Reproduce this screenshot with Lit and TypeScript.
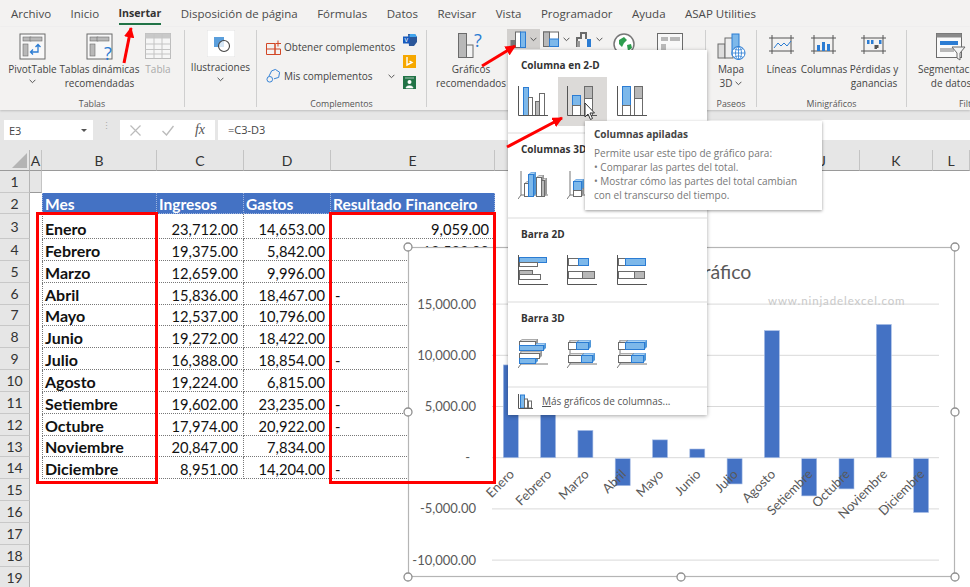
import { LitElement, html, css, svg } from 'lit';
import { customElement } from 'lit/decorators.js';

const GR = '#6b6b6b';
const BL = '#2b7cd3';
const BF = '#7db8ea';
const GF = '#b8b8b8';

// one rect of a mini chart: x, y, w, h, kind
type R = [number, number, number, number, 'b' | 'g' | 'w'];

const barRect = ([x, y, w, h, k]: R) => {
  const fill = k === 'b' ? BF : k === 'g' ? GF : '#fff';
  const stroke = k === 'b' ? BL : GR;
  return svg`<rect x=${x + 0.5} y=${y + 0.5} width=${w} height=${h} fill=${fill} stroke=${stroke} stroke-width="1"/>`;
};

const mini = (rects: R[]) => html`<svg class="mini" viewBox="0 0 30 32" width="30" height="32">
  ${rects.map(barRect)}
  <path d="M.5 1v29.5H30" fill="none" stroke="#555" stroke-width="1"/>
</svg>`;

// same thing with a little depth on every bar and a slanted floor
const mini3d = (rects: R[]) => html`<svg class="mini" viewBox="0 0 30 32" width="30" height="32">
  <path d="M3 2v24l-3 4M3 26h27" fill="none" stroke="#777" stroke-width="1"/>
  ${rects.map(([x, y, w, h, k]) => {
    const side = k === 'b' ? '#4f97d8' : '#999';
    return svg`<polygon points="${x + w + 0.5},${y + 0.5} ${x + w + 3},${y - 1.5} ${x + w + 3},${y + h - 2} ${x + w + 0.5},${y + h + 0.5}" fill=${side}/>
      <polygon points="${x + 0.5},${y + 0.5} ${x + 3},${y - 1.5} ${x + w + 3},${y - 1.5} ${x + w + 0.5},${y + 0.5}" fill=${k === 'b' ? '#a9d2f2' : '#ddd'} stroke=${k === 'b' ? BL : GR} stroke-width=".5"/>`;
  })}
  ${rects.map(barRect)}
</svg>`;

const chartGroups = [
  {
    title: 'Columna en 2-D',
    hover: 1,
    icons: [
      mini([[5, 2, 5, 28, 'b'], [10, 12, 4, 18, 'w'], [17, 16, 4, 14, 'g'], [21, 8, 5, 22, 'w']]),
      mini([[5, 10, 8, 10, 'b'], [5, 20, 8, 10, 'w'], [17, 1, 8, 12, 'g'], [17, 13, 8, 17, 'w']]),
      mini([[5, 1, 8, 19, 'b'], [5, 20, 8, 10, 'w'], [17, 1, 8, 12, 'g'], [17, 13, 8, 17, 'w']]),
    ],
  },
  {
    title: 'Columnas 3D',
    hover: -1,
    icons: [
      mini3d([[6, 14, 4, 13, 'w'], [10, 5, 5, 22, 'b'], [18, 8, 5, 19, 'w'], [23, 11, 3, 16, 'g']]),
      mini3d([[6, 12, 8, 9, 'b'], [6, 21, 8, 6, 'w'], [18, 6, 7, 8, 'g'], [18, 14, 7, 13, 'w']]),
      mini3d([[6, 3, 8, 16, 'b'], [6, 19, 8, 8, 'w'], [18, 3, 7, 9, 'g'], [18, 12, 7, 15, 'w']]),
    ],
  },
  {
    title: 'Barra 2D',
    hover: -1,
    icons: [
      mini([[1, 3, 27, 5, 'b'], [1, 8, 18, 4, 'w'], [1, 16, 13, 4, 'g'], [1, 20, 21, 5, 'w']]),
      mini([[1, 4, 10, 7, 'w'], [11, 4, 10, 7, 'b'], [1, 17, 14, 7, 'w'], [15, 17, 12, 7, 'g']]),
      mini([[1, 4, 7, 7, 'w'], [8, 4, 20, 7, 'b'], [1, 17, 16, 7, 'w'], [17, 17, 10, 7, 'g']]),
    ],
  },
  {
    title: 'Barra 3D',
    hover: -1,
    icons: [
      mini3d([[1, 3, 16, 4, 'w'], [1, 7, 24, 5, 'b'], [1, 15, 20, 5, 'w'], [1, 20, 16, 5, 'b']]),
      mini3d([[1, 4, 8, 7, 'w'], [9, 4, 12, 7, 'b'], [1, 17, 13, 7, 'w'], [14, 17, 11, 7, 'b']]),
      mini3d([[1, 4, 7, 7, 'w'], [8, 4, 19, 7, 'b'], [1, 17, 13, 7, 'w'], [14, 17, 12, 7, 'b']]),
    ],
  },
];

const chevron = html`<svg class="chev" width="7" height="5" viewBox="0 0 7 5"><path d="M.6 .8 3.5 3.7 6.4 .8" fill="none" stroke="#555" stroke-width="1"/></svg>`;

const tableBase = svg`
  <rect x="1" y="1" width="25" height="25" fill="#f8f8f8" stroke=${GR}/>
  <rect x="4" y="4" width="8" height="4" fill=${GF} stroke=${GR} stroke-width=".6"/>
  <rect x="11" y="4" width="12" height="4" fill=${GF} stroke=${GR} stroke-width=".6"/>
  <rect x="4" y="11" width="5" height="12" fill=${GF} stroke=${GR} stroke-width=".6"/>`;

const pivotIcon = html`<svg width="28" height="28" viewBox="0 0 28 28">
  ${tableBase}
  <path d="M19 12v7h-7M16.500 14 19 11.500 21.500 14M14 16.500 11.500 19 14 21.500" fill="none" stroke=${BL} stroke-width="1.300"/>
</svg>`;
const recoIcon = html`<svg class="ov" width="28" height="28" viewBox="0 0 28 28">
  ${tableBase}
  <text x="18" y="27" class="qm">?</text>
</svg>`;
const tablaIcon = html`<svg width="27" height="27" viewBox="0 0 27 27">
  <rect x=".5" y=".5" width="25" height="25" fill="#f6f6f6" stroke="#bdbdbd"/>
  <rect x=".5" y=".5" width="25" height="5" fill="#c9c9c9"/>
  <path d="M.5 11h25M.5 16.500h25M.5 21h25M9 .5v25M17 .5v25" stroke="#c4c4c4" fill="none"/>
</svg>`;
const ilusIcon = html`<svg width="28" height="27" viewBox="0 0 28 27">
  <rect width="28" height="27" fill="#fff" stroke="#e2e2e2"/>
  <rect x="7" y="7" width="10" height="10" fill="#5b9fdc"/>
  <circle cx="17" cy="16" r="5.500" fill="#fff" fill-opacity=".75" stroke="#444" stroke-width="1.100"/>
</svg>`;
const addinIcon = html`<svg width="15" height="15" viewBox="0 0 15 15">
  <path d="M.5 3.500h8.500v11H.5zM.5 9h14v5.500H9M9 3.500v11" fill="none" stroke="#d24726" stroke-width="1"/>
  <path d="M12 .5v6M9.500 3.500h5.500" stroke="#d24726" stroke-width="1"/>
</svg>`;
const myIcon = html`<svg width="15" height="16" viewBox="0 0 16 16">
  <path d="M6 2.500 10 1l4.500 3-1 5.500-5 1.500" fill="none" stroke=${BL} stroke-width="1"/>
  <circle cx="4" cy="11.500" r="3" fill="none" stroke=${BL} stroke-width="1"/>
  <path d="M6 2.500 3 8.500" stroke=${BL} stroke-width="1"/>
</svg>`;
const visioIcon = html`<svg width="14" height="13" viewBox="0 0 14 13">
  <path d="M5 0h7l2 3v5l-3 4H6z" fill="#2b579a"/><path d="M7 0h5l2 3H6z" fill="#41a5ee"/>
  <rect y="2.500" width="7" height="7" fill="#185abd"/>
  <text x="1.500" y="8.200" class="tiny">v</text>
</svg>`;
const bingIcon = html`<svg width="13" height="13" viewBox="0 0 13 13">
  <rect width="13" height="13" fill="#f6a800"/>
  <path d="M4 2v8l5-2.500L6.500 6" fill="none" stroke="#fff" stroke-width="1.400"/>
</svg>`;
const peopleIcon = html`<svg width="13" height="13" viewBox="0 0 13 13">
  <rect width="13" height="13" fill="#217346"/>
  <circle cx="6.500" cy="6" r="2" fill="#fff"/><path d="M3 12c0-3 7-3 7 0zM2 2h9" fill="#fff" stroke="#fff" stroke-width=".6"/>
</svg>`;
const recoChartIcon = html`<svg class="ov" width="26" height="26" viewBox="0 0 26 26">
  <rect x=".5" y=".5" width="8" height="24" fill=${GF} stroke=${GR}/>
  <rect x="8.500" y="12" width="6.500" height="12.500" fill="#f4f4f4" stroke=${GR}/>
  <text x="16" y="14" class="qm">?</text>
</svg>`;
const colBtn = html`<svg width="17" height="17" viewBox="0 0 17 17">
  <rect x=".5" y="9" width="5" height="7.500" fill="#777"/>
  <rect x="5.500" y="1" width="5" height="15.500" fill="#fff" stroke=${GR}/>
  <rect x="10.500" y="1" width="5" height="15.500" fill=${BF} stroke=${BL}/>
</svg>`;
const stackBtn = html`<svg width="17" height="17" viewBox="0 0 17 17">
  <rect x=".5" y="1" width="15" height="14.500" fill="#fff" stroke=${GR}/>
  <rect x=".5" y="1" width="6" height="14.500" fill=${GF} stroke=${GR}/>
  <rect x="6.500" y="8" width="9" height="7.500" fill=${BF} stroke=${BL}/>
</svg>`;
const stepBtn = html`<svg width="17" height="17" viewBox="0 0 17 17">
  <path d="M1 16V7h4V2h5v6" fill="none" stroke=${GR} stroke-width="2"/>
  <rect x="11" y="8" width="4" height="8" fill=${BL}/>
  <rect x="1" y="10" width="3" height="6" fill="#999"/>
</svg>`;
const globeIcon = html`<svg width="22" height="22" viewBox="0 0 22 22">
  <circle cx="11" cy="11" r="10" fill="#fff" stroke="#777" stroke-width="1.500"/>
  <path d="M6 7l5-3 3 3-3 3-2 4-3-3zM14 12l4-1 1 4-4 3z" fill="#2e9e4f"/>
</svg>`;
const layoutIcon = html`<svg width="27" height="22" viewBox="0 0 27 22">
  <rect x=".5" y=".5" width="25" height="21" fill="#f8f8f8" stroke=${GR}/>
  <rect x="4" y="4" width="7" height="4" fill=${GF}/><rect x="13" y="4" width="10" height="4" fill=${GF}/>
  <rect x="4" y="11" width="5" height="9" fill=${GF}/>
</svg>`;
const mapaIcon = html`<svg width="29" height="28" viewBox="0 0 29 28">
  <rect x="1" y="11" width="7" height="14" fill="#ddd" stroke=${GR}/>
  <rect x="8" y="5" width="8" height="20" fill="#eee" stroke=${GR}/>
  <rect x="15" y="1" width="7" height="21" fill=${BF} stroke=${BL}/>
  <circle cx="21.500" cy="20" r="6.500" fill="#fff" stroke=${BL}/>
  <path d="M15 20h13M21.500 13.500v13M17 15.500c3 2 6 2 9 0M17 24.500c3-2 6-2 9 0" fill="none" stroke=${BL} stroke-width=".8"/>
  <ellipse cx="21.500" cy="20" rx="3" ry="6.500" fill="none" stroke=${BL} stroke-width=".8"/>
</svg>`;
const sparkBase = 'M0 3h25M3 0v19M0 16h25M22 0v19';
const lineasIcon = html`<svg width="26" height="20" viewBox="0 0 26 20">
  <path d=${sparkBase} stroke="#555" fill="none"/><path d="M5 13l4-5 3 3 3-3 3 3 4-5" stroke=${BL} fill="none"/>
</svg>`;
const colsIcon = html`<svg width="26" height="20" viewBox="0 0 26 20">
  <path d=${sparkBase} stroke="#555" fill="none"/>
  <rect x="6" y="10" width="3" height="6" fill=${BL}/><rect x="11" y="7" width="3" height="9" fill=${BL}/><rect x="16" y="9" width="3" height="7" fill=${BL}/>
</svg>`;
const winIcon = html`<svg width="26" height="20" viewBox="0 0 26 20">
  <path d=${sparkBase} stroke="#555" fill="none"/>
  <rect x="6" y="5" width="2.500" height="4" fill=${BL}/><rect x="10" y="5" width="2.500" height="4" fill=${BL}/><rect x="18" y="5" width="2.500" height="4" fill=${BL}/>
  <rect x="13.500" y="10" width="2.500" height="4" fill="#555"/><rect x="16" y="10" width="1.500" height="3" fill="#555"/>
</svg>`;
const sliceIcon = html`<svg width="30" height="28" viewBox="0 0 30 28">
  <rect x=".5" y=".5" width="25" height="24" fill="#fafafa" stroke=${GR}/>
  <rect x=".5" y=".5" width="25" height="4" fill="#8a8a8a"/>
  <rect x="4" y="8" width="18" height="4" fill=${BL}/>
  <rect x="4" y="15" width="14" height="4" fill=${GF}/>
  <path d="M16 14h13l-5 6v7l-3-2v-5z" fill="#f4f4f4" stroke=${GR}/>
</svg>`;

const months: [string, number, number][] = [
  ['Enero', 23712, 14653],
  ['Febrero', 19375, 5842],
  ['Marzo', 12659, 9996],
  ['Abril', 15836, 18467],
  ['Mayo', 12537, 10796],
  ['Junio', 19272, 18422],
  ['Julio', 16388, 18854],
  ['Agosto', 19224, 6815],
  ['Setiembre', 19602, 23235],
  ['Octubre', 17974, 20922],
  ['Noviembre', 20847, 7834],
  ['Diciembre', 8951, 14204],
];

const money = (n: number) =>
  Math.abs(n).toLocaleString('en-US', { minimumFractionDigits: 2, maximumFractionDigits: 2 });

const columns = ['A', 'B', 'C', 'D', 'E', 'F', 'G', 'H', 'I', 'J', 'K', 'L'];

@customElement('sheet-grid')
class SheetGrid extends LitElement {
  static styles = css`
    :host {
      display: grid;
      grid-template-columns: 30px 12px 115px 87px 87px 164px repeat(6, 73px) 1fr;
      grid-template-rows: 21px 22px 21px 25px repeat(16, 21.85px);
      height: 437px;
      overflow: hidden;
      background: #fff;
      font-family: 'Lato', 'Liberation Sans', sans-serif;
      font-size: 14.7px;
      color: #111;
    }
    .corner {
      background: #e6e6e6;
      border-right: 1px solid #b5b5b5;
      border-bottom: 1px solid #9a9a9a;
      position: relative;
    }
    .corner::after {
      content: '';
      position: absolute;
      right: 2px;
      bottom: 2px;
      border-style: solid;
      border-width: 0 0 15px 15px;
      border-color: transparent transparent #b4b4b4 transparent;
    }
    .ch {
      background: #e6e6e6;
      border-right: 1px solid #c4c4c4;
      border-bottom: 1px solid #9a9a9a;
      display: flex;
      align-items: center;
      justify-content: center;
      color: #333;
      font-size: 14px;
    }
    .rh {
      grid-column: 1;
      background: #e6e6e6;
      border-right: 1px solid #b5b5b5;
      border-bottom: 1px solid #c8c8c8;
      display: flex;
      align-items: center;
      justify-content: center;
      color: #333;
      font-size: 14px;
    }
    .c {
      padding: 0 2px;
      display: flex;
      align-items: flex-end;
      line-height: 18px;
      white-space: nowrap;
      overflow: hidden;
      border-right: 1px dotted #777;
      border-bottom: 1px dotted #777;
    }
    .num {
      justify-content: flex-end;
      padding-right: 5px;
    }
    .first {
      font-weight: 700;
      font-size: 16px;
      border-left: 1px dotted #777;
    }
    .head {
      background: #4472c4;
      color: #fff;
      font-weight: 700;
      font-size: 15.5px;
      border-color: #9db3dd;
    }
    .dash {
      padding-left: 2px;
    }
    .amount {
      margin-left: auto;
    }
  `;

  // explicit column and row for a table cell
  at(col: number, row: number) {
    return `grid-column:${col};grid-row:${row}`;
  }

  render() {
    return html`
      <div class="corner"></div>
      ${columns.map((c) => html`<div class="ch">${c}</div>`)}
      <div class="ch"></div>
      ${Array.from({ length: 19 }, (_, i) => html`<div class="rh" style="grid-row:${i + 2}">${i + 1}</div>`)}
      <div class="c head first" style=${this.at(3, 3)}>Mes</div>
      <div class="c head" style=${this.at(4, 3)}>Ingresos</div>
      <div class="c head" style=${this.at(5, 3)}>Gastos</div>
      <div class="c head" style=${this.at(6, 3)}>Resultado Financeiro</div>
      ${months.map(([m, a, b], i) => {
        const d = a - b;
        return html`
          <div class="c first" style=${this.at(3, i + 4)}>${m}</div>
          <div class="c num" style=${this.at(4, i + 4)}>${money(a)}</div>
          <div class="c num" style=${this.at(5, i + 4)}>${money(b)}</div>
          <div class="c num" style=${this.at(6, i + 4)}>
            ${d < 0 ? html`<span class="dash">-</span>` : ''}<span class="amount">${money(d)}</span>
          </div>
        `;
      })}
    `;
  }
}

@customElement('bar-chart')
class BarChart extends LitElement {
  static styles = css`
    :host {
      position: absolute;
      left: 408px;
      top: 247px;
      width: 547px;
      height: 330px;
      background: #fff;
    }
    svg {
      overflow: visible;
      display: block;
    }
    text {
      font-family: 'Lato', 'Liberation Sans', sans-serif;
      fill: #595959;
    }
    .tick {
      font-size: 13px;
    }
    .cat {
      font-size: 13px;
    }
    .title {
      font-size: 19.500px;
    }
    .mark {
      font-size: 11.500px;
      fill: #c9c9c9;
      letter-spacing: 0.9px;
    }
  `;

  render() {
    const zero = 210.7;
    const perUnit = 51.2 / 5000;
    const ticks: [number, string][] = [
      [15000, '15,000.00'],
      [10000, '10,000.00'],
      [5000, '5,000.00'],
      [0, '-'],
      [-5000, '-5,000.00'],
      [-10000, '-10,000.00'],
    ];
    const handles = [
      [0, 0],
      [273, 0],
      [547, 0],
      [0, 165],
      [547, 165],
      [0, 330],
      [273, 330],
      [547, 330],
    ];
    return html`<svg width="547" height="330" viewBox="0 0 547 330">
      <rect x=".5" y=".5" width="546" height="329" fill="#fff" stroke="#b5b5b5" stroke-width="1.200"/>
      <text class="title" x="272" y="32" text-anchor="middle">Título del gráfico</text>
      ${ticks.map(([v, label]) => {
        const y = zero - v * perUnit;
        return svg`
          <line x1="84" x2="531" y1=${y} y2=${y} stroke="#d9d9d9" stroke-width="1"/>
          <text class="tick" x=${v === 0 ? 62 : 68} y=${y + 4.500} text-anchor="end">${label}</text>`;
      })}
      ${months.map(([, a, b], i) => {
        const d = a - b;
        const h = Math.abs(d) * perUnit;
        const x = 95.3 + i * 37.3;
        return svg`<rect x=${x} y=${d > 0 ? zero - h : zero + 1} width="15" height=${h} fill="#4472c4" stroke="#a9bee6" stroke-width=".6"/>`;
      })}
      ${months.map(([m], i) => {
        const x = 107 + i * 37.3;
        return svg`<text class="cat" transform="translate(${x} 228) rotate(-45)" text-anchor="end">${m}</text>`;
      })}
      <text class="mark" x="360" y="58">www.ninjadelexcel.com</text>
      ${handles.map(
        ([x, y]) => svg`<circle cx=${x} cy=${y} r="4" fill="#fff" stroke="#8f8f8f" stroke-width="1.300"/>`
      )}
    </svg>`;
  }
}

@customElement('app-root')
class AppRoot extends LitElement {
  static styles = css`
    :host {
      display: flex;
      flex-direction: column;
      position: relative;
      width: 970px;
      height: 587px;
      overflow: hidden;
      background: #f3f2f1;
      font-family: 'Open Sans', 'Liberation Sans', sans-serif;
      color: #444;
    }
    .tabs {
      display: flex;
      gap: 19.500px;
      height: 27px;
      padding-left: 11px;
      font-size: 11.500px;
      line-height: 27px;
      white-space: nowrap;
      color: #4a4a4a;
    }
    .tabs .on {
      font-weight: 700;
      font-size: 10.600px;
      color: #333;
      position: relative;
    }
    .tabs .on::after {
      content: '';
      position: absolute;
      left: 0;
      right: 0;
      top: 23px;
      height: 2px;
      background: #217346;
    }
    .ribbon {
      display: flex;
      height: 83px;
      padding-top: 3px;
      box-sizing: border-box;
      font-size: 10px;
      line-height: 14px;
      box-shadow: 0 1px 2px #bdbdbd;
      position: relative;
      white-space: nowrap;
    }
    .group {
      display: flex;
      flex-direction: column;
      height: 77px;
      box-sizing: content-box;
      border-right: 1px solid #cfcfcf;
      flex: none;
    }
    .group-body {
      display: flex;
      flex: 1;
    }
    .group-name {
      text-align: center;
      font-size: 8.800px;
      line-height: 14px;
      margin-bottom: -4px;
      color: #555;
    }
    .tablas { width: 184px; }
    .ilus { width: 71px; }
    .comp { width: 169px; }
    .graf { width: 278px; }
    .pase { width: 50px; }
    .mini-g { width: 149px; }
    .filt { flex: 1; border-right: none; }
    .tablas .group-body { padding-left: 5px; }
    .mini-g .group-body { padding-left: 5px; }
    .graf .group-body { padding-left: 6px; }
    .filt .group-body { padding-left: 4px; }
    .big {
      display: flex;
      flex-direction: column;
      align-items: center;
      flex: none;
      text-align: center;
    }
    .big .ico {
      height: 32px;
      padding-top: 3px;
      box-sizing: border-box;
      display: flex;
      justify-content: center;
    }
    .big .ico.low {
      padding-top: 5px;
    }
    .w38 { width: 38px; }
    .w39 { width: 39px; }
    .w46 { width: 46px; }
    .w50 { width: 50px; }
    .w54 { width: 54px; }
    .w55 { width: 55px; }
    .w71 { width: 71px; }
    .w76 { width: 76px; }
    .w79 { width: 79px; }
    .w80 { width: 80px; }
    .dim { color: #aaa; }
    .ov { overflow: visible; }
    .qm {
      font-family: 'Open Sans', sans-serif;
      font-size: 18px;
      fill: #2b7cd3;
    }
    .tiny {
      font-family: 'Open Sans', sans-serif;
      font-size: 7px;
      fill: #fff;
    }
    .big .ico.ilus-ico {
      height: 30px;
      padding-top: 0;
    }
    .chev { display: block; margin: 3px auto 0; }
    .chev-line {
      display: flex;
      align-items: center;
      gap: 3px;
    }
    .chev-line .chev { margin: 0; }
    .comp .group-body {
      justify-content: space-between;
      padding: 0 9px 0 9px;
    }
    .comp-rows {
      display: flex;
      flex-direction: column;
      gap: 13px;
      padding-top: 9px;
    }
    .row {
      display: flex;
      align-items: center;
      gap: 3px;
      height: 16px;
    }
    .row .chev { margin: 0 0 0 12px; }
    .comp-side {
      display: flex;
      flex-direction: column;
      gap: 8px;
      padding-top: 4px;
    }
    .small-btns {
      display: flex;
      height: 20px;
      margin: -1px 0 0 -2px;
    }
    .small-btn {
      display: flex;
      align-items: center;
      gap: 3px;
      height: 20px;
      padding: 0 3px;
      box-sizing: border-box;
      width: 33px;
    }
    .small-btn .chev { margin: 0; }
    .small-btn.hot { background: #d2d0ce; }
    .globe {
      margin: 3px 0 0 7px;
    }
    .layout {
      margin: 3px 0 0 22px;
    }
    .formula {
      display: flex;
      align-items: flex-start;
      height: 40px;
      padding: 10px 0 0 4px;
      box-sizing: border-box;
      background: #e6e6e6;
      font-size: 11px;
      color: #444;
    }
    .name {
      width: 89px;
      height: 20px;
      background: #fff;
      box-sizing: border-box;
      padding: 0 6px 0 5px;
      display: flex;
      align-items: center;
      justify-content: space-between;
    }
    .caret {
      width: 0;
      height: 0;
      border-style: solid;
      border-width: 3px 3px 0;
      border-color: #555 transparent transparent;
    }
    .grip {
      width: 27px;
      display: flex;
      justify-content: center;
      color: #aaa;
      font-size: 9px;
      line-height: 6px;
      padding-top: 3px;
      flex-direction: column;
      align-items: center;
    }
    .fx {
      width: 95px;
      height: 20px;
      background: #fff;
      display: flex;
      align-items: center;
      justify-content: space-between;
      box-sizing: border-box;
      padding: 0 10px;
      margin-right: 3px;
    }
    .fx i {
      font-family: 'Liberation Serif', serif;
      font-size: 14px;
      color: #555;
    }
    .input {
      flex: 1;
      height: 20px;
      background: #fff;
      padding-left: 10px;
      line-height: 20px;
    }
    /* dropdown with the chart types */
    .menu {
      position: absolute;
      left: 508px;
      top: 50px;
      width: 199px;
      height: 365px;
      background: #fff;
      box-shadow: 0 1px 4px rgba(0, 0, 0, 0.35);
      font-size: 10px;
      display: flex;
      flex-direction: column;
      box-sizing: border-box;
    }
    .sec {
      height: 84.400px;
      border-bottom: 2px solid #ededed;
      box-sizing: border-box;
      padding: 8px 0 0 13px;
    }
    .sec b {
      display: block;
      line-height: 14px;
      color: #333;
    }
    .icons {
      display: flex;
      margin: 5px 0 0 -13px;
    }
    .ic {
      width: 49.500px;
      height: 49px;
      padding-top: 8px;
      box-sizing: border-box;
      display: flex;
      justify-content: center;
    }
    .ic.hot { background: #dcdad8; }
    .more {
      display: flex;
      align-items: center;
      gap: 9px;
      padding: 6px 0 0 10px;
      color: #555;
    }
    .more u { text-decoration-thickness: 1px; }
    /* tooltip of the hovered chart */
    .tip {
      position: absolute;
      left: 585px;
      top: 121px;
      width: 237px;
      height: 89px;
      box-sizing: border-box;
      background: #fff;
      box-shadow: 0 1px 3px rgba(0, 0, 0, 0.4);
      padding: 6px 9px;
      font-size: 10px;
      line-height: 14px;
      color: #777;
      white-space: nowrap;
    }
    .tip b {
      display: block;
      color: #444;
      margin-bottom: 5px;
    }
    .over {
      position: absolute;
      left: 0;
      top: 0;
      pointer-events: none;
    }
    .box {
      position: absolute;
      top: 212px;
      height: 272px;
      box-sizing: border-box;
      border: 3px solid #f00;
    }
    .box.b1 { left: 36px; width: 122px; }
    .box.b2 { left: 329px; width: 167px; }
  `;

  render() {
    return html`
      <div class="tabs">
        <span>Archivo</span><span>Inicio</span><span class="on">Insertar</span>
        <span>Disposición de página</span><span>Fórmulas</span><span>Datos</span><span>Revisar</span>
        <span>Vista</span><span>Programador</span><span>Ayuda</span><span>ASAP Utilities</span>
      </div>

      <div class="ribbon">
        <div class="group tablas">
          <div class="group-body">
            <div class="big w55"><div class="ico">${pivotIcon}</div>PivotTable${chevron}</div>
            <div class="big w79"><div class="ico">${recoIcon}</div>Tablas dinámicas<br />recomendadas</div>
            <div class="big w38 dim"><div class="ico">${tablaIcon}</div>Tabla</div>
          </div>
          <div class="group-name">Tablas</div>
        </div>
        <div class="group ilus">
          <div class="group-body">
            <div class="big w71"><div class="ico ilus-ico">${ilusIcon}</div>Ilustraciones${chevron}</div>
          </div>
          <div class="group-name">&nbsp;</div>
        </div>
        <div class="group comp">
          <div class="group-body">
            <div class="comp-rows">
              <div class="row">${addinIcon}<span>Obtener complementos</span></div>
              <div class="row">${myIcon}<span>Mis complementos</span>${chevron}</div>
            </div>
            <div class="comp-side">${visioIcon}${bingIcon}${peopleIcon}</div>
          </div>
          <div class="group-name">Complementos</div>
        </div>
        <div class="group graf">
          <div class="group-body">
            <div class="big w76"><div class="ico">${recoChartIcon}</div>Gráficos<br />recomendados</div>
            <div class="small-btns">
              <div class="small-btn hot">${colBtn}${chevron}</div>
              <div class="small-btn">${stackBtn}${chevron}</div>
              <div class="small-btn">${stepBtn}${chevron}</div>
            </div>
            <div class="globe">${globeIcon}</div>
            <div class="layout">${layoutIcon}</div>
          </div>
          <div class="group-name">&nbsp;</div>
        </div>
        <div class="group pase">
          <div class="group-body">
            <div class="big w50"><div class="ico">${mapaIcon}</div>Mapa<span class="chev-line">3D ${chevron}</span></div>
          </div>
          <div class="group-name">Paseos</div>
        </div>
        <div class="group mini-g">
          <div class="group-body">
            <div class="big w39"><div class="ico low">${lineasIcon}</div>Líneas</div>
            <div class="big w46"><div class="ico low">${colsIcon}</div>Columnas</div>
            <div class="big w54"><div class="ico low">${winIcon}</div>Pérdidas y<br />ganancias</div>
          </div>
          <div class="group-name">Minigráficos</div>
        </div>
        <div class="group filt">
          <div class="group-body">
            <div class="big w80"><div class="ico">${sliceIcon}</div>Segmentación<br />de datos</div>
          </div>
          <div class="group-name" style="padding-left:52px;text-align:left;">Filtros</div>
        </div>
      </div>

      <div class="formula">
        <div class="name">E3<span class="caret"></span></div>
        <div class="grip">⋮</div>
        <div class="fx">
          <svg width="11" height="11" viewBox="0 0 11 11"><path d="M.5 .5l10 10M10.500 .5l-10 10" stroke="#bbb" stroke-width="1.200"/></svg>
          <svg width="12" height="11" viewBox="0 0 12 11"><path d="M.5 6l4 4 7-9" fill="none" stroke="#bbb" stroke-width="1.400"/></svg>
          <i>fx</i>
        </div>
        <div class="input">=C3-D3</div>
      </div>

      <sheet-grid></sheet-grid>
      <bar-chart></bar-chart>

      <div class="menu">
        ${chartGroups.map(
          (g) => html`<div class="sec">
            <b>${g.title}</b>
            <div class="icons">
              ${g.icons.map((ic, i) => html`<div class="ic ${i === g.hover ? 'hot' : ''}">${ic}</div>`)}
            </div>
          </div>`
        )}
        <div class="more">
          <svg width="15" height="15" viewBox="0 0 15 15">
            <rect x="2.500" y="1" width="4" height="13" fill=${BF} stroke=${BL}/>
            <rect x="6.500" y="5" width="3" height="9" fill="#fff" stroke=${GR}/>
            <rect x="10.500" y="7" width="3" height="7" fill="#fff" stroke=${GR}/>
            <path d="M.5 0v14.500H15" fill="none" stroke="#555"/>
          </svg>
          <span><u>M</u>ás gráficos de columnas...</span>
        </div>
      </div>

      <div class="box b1"></div>
      <div class="box b2"></div>

      <div class="tip">
        <b>Columnas apiladas</b>
        Permite usar este tipo de gráfico para:<br />
        • Comparar las partes del total.<br />
        • Mostrar cómo las partes del total cambian<br />
        con el transcurso del tiempo.
      </div>

      <svg class="over" width="970" height="587" viewBox="0 0 970 587">
        <defs>
          <marker id="head" viewBox="0 0 10 10" refX="9" refY="5" markerWidth="3.500" markerHeight="3.500" orient="auto">
            <path d="M0 0 10 5 0 10z" fill="#f00"/>
          </marker>
        </defs>
        <path d="M124 63 131 28" stroke="#f00" stroke-width="3" marker-end="url(#head)"/>
        <path d="M482 66 515 46" stroke="#f00" stroke-width="3" marker-end="url(#head)"/>
        <path d="M507 147 562 118" stroke="#f00" stroke-width="3" marker-end="url(#head)"/>
        <path d="M585 103v14l3-3 2.500 5.500 2-1-2.500-5.500h4.500z" fill="#fff" stroke="#333" stroke-width="1"/>
      </svg>
    `;
  }
}
